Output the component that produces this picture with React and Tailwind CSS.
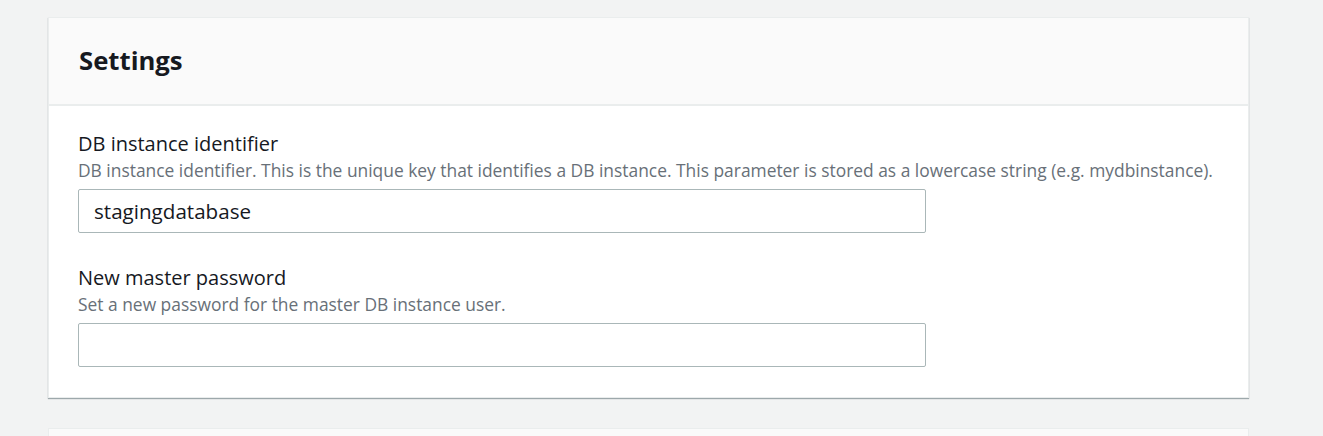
import React from 'react';

const Field = ({ label, hint, value }) => (
  <div className="flex flex-col">
    <label className="text-[20px] leading-[26px] text-[#16191f]">{label}</label>
    <p className="text-[17.4px] leading-[26px] text-[#687078]">{hint}</p>
    <input
      type="text"
      defaultValue={value}
      className="mt-[6px] w-[848px] h-[44px] border border-[#aab7b8] rounded-[2px] px-[15px] text-[20.6px] text-[#16191f] bg-white outline-none"
    />
  </div>
);

const App = () => {
  return (
    <div
      className="min-h-screen w-full bg-[#f2f3f3] pt-[17px] pl-[48px] overflow-hidden"
      style={{ fontFamily: '"Open Sans", "Noto Sans", sans-serif' }}
    >
      <div className="w-[1201px] bg-white border border-[#eaeded] shadow-[0_1px_1px_0_rgba(0,28,36,0.35)]">
        <div className="h-[88px] bg-[#fafafa] border-b-2 border-[#eaeded] flex items-center px-[30px]">
          <h2 className="text-[25.7px] font-bold text-[#16191f]">Settings</h2>
        </div>
        <div className="px-[29px] pt-[25px] pb-[30px] flex flex-col gap-[32px]">
          <Field
            label="DB instance identifier"
            hint="DB instance identifier. This is the unique key that identifies a DB instance. This parameter is stored as a lowercase string (e.g. mydbinstance)."
            value="stagingdatabase"
          />
          <Field
            label="New master password"
            hint="Set a new password for the master DB instance user."
            value=""
          />
        </div>
      </div>
      <div className="mt-[30px] w-[1201px] h-[40px] bg-[#fafafa] border border-[#eaeded]"></div>
    </div>
  );
};

export default App;
